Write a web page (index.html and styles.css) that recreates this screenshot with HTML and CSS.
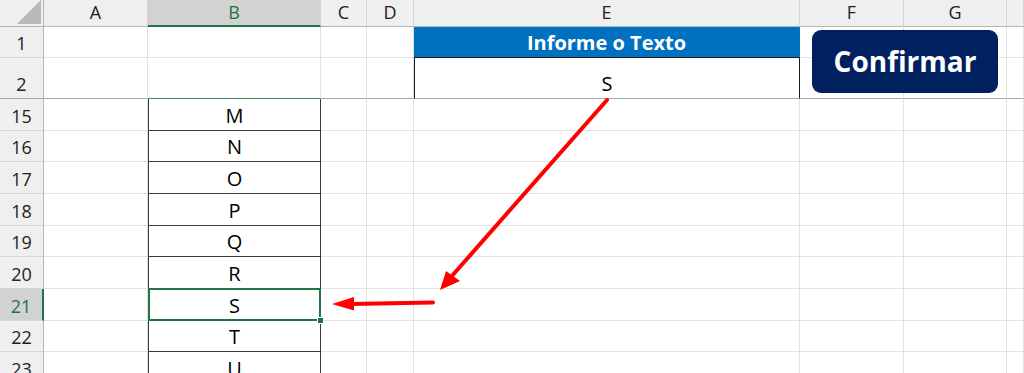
FILE: index.html
```html
<!DOCTYPE html>
<html lang="pt">
<head>
<meta charset="utf-8">
<title>Planilha</title>
<link rel="stylesheet" href="styles.css">
</head>
<body>
<div class="sheet">
  <!-- header row -->
  <div class="corner"><span class="tri"></span></div>
  <div class="ch">A</div>
  <div class="ch active">B</div>
  <div class="ch">C</div>
  <div class="ch">D</div>
  <div class="ch">E</div>
  <div class="ch">F</div>
  <div class="ch">G</div>
  <div class="ch"></div>

  <!-- row 1 -->
  <div class="rh">1</div>
  <div class="c"></div>
  <div class="c"></div>
  <div class="c"></div>
  <div class="c"></div>
  <div class="c title">Informe o Texto</div>
  <div class="c"></div>
  <div class="c"></div>
  <div class="c"></div>

  <!-- row 2 -->
  <div class="rh frz">2</div>
  <div class="c frz"></div>
  <div class="c frz mark"></div>
  <div class="c frz"></div>
  <div class="c frz"></div>
  <div class="c frz input">S</div>
  <div class="c frz"></div>
  <div class="c frz"></div>
  <div class="c frz"></div>

  <!-- row 15 -->
  <div class="rh">15</div>
  <div class="c"></div><div class="c box">M</div><div class="c"></div><div class="c"></div><div class="c"></div><div class="c"></div><div class="c"></div><div class="c"></div>
  <!-- row 16 -->
  <div class="rh">16</div>
  <div class="c"></div><div class="c box">N</div><div class="c"></div><div class="c"></div><div class="c"></div><div class="c"></div><div class="c"></div><div class="c"></div>
  <!-- row 17 -->
  <div class="rh">17</div>
  <div class="c"></div><div class="c box">O</div><div class="c"></div><div class="c"></div><div class="c"></div><div class="c"></div><div class="c"></div><div class="c"></div>
  <!-- row 18 -->
  <div class="rh">18</div>
  <div class="c"></div><div class="c box">P</div><div class="c"></div><div class="c"></div><div class="c"></div><div class="c"></div><div class="c"></div><div class="c"></div>
  <!-- row 19 -->
  <div class="rh">19</div>
  <div class="c"></div><div class="c box">Q</div><div class="c"></div><div class="c"></div><div class="c"></div><div class="c"></div><div class="c"></div><div class="c"></div>
  <!-- row 20 -->
  <div class="rh">20</div>
  <div class="c"></div><div class="c box">R</div><div class="c"></div><div class="c"></div><div class="c"></div><div class="c"></div><div class="c"></div><div class="c"></div>
  <!-- row 21 -->
  <div class="rh active">21</div>
  <div class="c"></div><div class="c box sel">S<span class="handle"></span></div><div class="c"></div><div class="c"></div><div class="c"></div><div class="c"></div><div class="c"></div><div class="c"></div>
  <!-- row 22 -->
  <div class="rh">22</div>
  <div class="c"></div><div class="c box">T</div><div class="c"></div><div class="c"></div><div class="c"></div><div class="c"></div><div class="c"></div><div class="c"></div>
  <!-- row 23 -->
  <div class="rh">23</div>
  <div class="c"></div><div class="c box">U</div><div class="c"></div><div class="c"></div><div class="c"></div><div class="c"></div><div class="c"></div><div class="c"></div>

  <button class="confirm" type="button">Confirmar</button>

  <svg class="arrows" width="1024" height="373" viewBox="0 0 1024 373" aria-hidden="true">
    <line x1="607" y1="100" x2="451" y2="277" stroke="#ff0000" stroke-width="4" stroke-linecap="round"/>
    <polygon points="440,290 446,271 460,281" fill="#ff0000"/>
    <line x1="433" y1="302.5" x2="350" y2="304" stroke="#ff0000" stroke-width="4" stroke-linecap="round"/>
    <polygon points="332,304 354,297 354,310.5" fill="#ff0000"/>
  </svg>
</div>
</body>
</html>
```

FILE: styles.css
```css
html, body {
  margin: 0;
  padding: 0;
  background: #ffffff;
  overflow: hidden;
}

.sheet {
  position: relative;
  display: grid;
  grid-template-columns: 44px 104px 173px 46px 47px 386px 104px 103px 17px;
  grid-template-rows: 27px 31px 41px 32px 31px 32px 32px 31px 32px 32px 31px 32px;
  width: 1024px;
  height: 373px;
  overflow: hidden;
  font-family: "Open Sans", "Noto Sans", sans-serif;
  color: #000;
}

.corner {
  background: #efefef;
  border-right: 1px solid #b5b5b5;
  border-bottom: 1px solid #b5b5b5;
  box-sizing: border-box;
  display: flex;
  justify-content: flex-end;
  align-items: flex-end;
  padding: 0 2px 2px 0;
}

.tri {
  width: 0;
  height: 0;
  border-left: 24px solid transparent;
  border-bottom: 24px solid #b9b9b9;
}

.ch {
  box-sizing: border-box;
  background: #efefef;
  border-right: 1px solid #d6d6d6;
  border-bottom: 1px solid #b5b5b5;
  display: flex;
  justify-content: center;
  align-items: center;
  padding-bottom: 2px;
  font-size: 18px;
  line-height: 24px;
  color: #222;
}

.ch.active {
  background: #d2d2d2;
  color: #217346;
  border-bottom: 2px solid #217346;
}

.rh {
  box-sizing: border-box;
  background: #efefef;
  border-right: 1px solid #b5b5b5;
  border-bottom: 1px solid #d6d6d6;
  display: flex;
  justify-content: center;
  align-items: flex-end;
  padding-bottom: 2px;
  font-size: 18px;
  line-height: 24px;
  color: #222;
}

.rh.active {
  background: #d2d2d2;
  color: #217346;
  border-right: 2px solid #217346;
}

.c {
  box-sizing: border-box;
  border-right: 1px solid #e1e1e1;
  border-bottom: 1px solid #e1e1e1;
  display: flex;
  justify-content: center;
  align-items: flex-end;
  padding-bottom: 1px;
  font-size: 20px;
  line-height: 26px;
  white-space: nowrap;
}

.frz {
  border-bottom: 1px solid #a8a8a8;
}

.c.mark {
  border-bottom: 1px solid #3f8a5f;
}

.title {
  background: #0070c0;
  color: #ffffff;
  font-weight: 700;
  border-right-color: #0070c0;
  border-bottom: 1px solid #1a1a1a;
}

.input {
  border-left: 1px solid #1a1a1a;
  border-right: 1px solid #1a1a1a;
}

.box {
  border-left: 1px solid #3a3a3a;
  border-right: 1px solid #3a3a3a;
  border-bottom: 1px solid #3a3a3a;
}

.sel {
  position: relative;
  border-left: 0;
  border-right: 0;
  margin-top: -1px;
  border-bottom: 0;
  box-shadow: inset 0 0 0 2px #217346;
  padding-bottom: 2px;
}

.handle {
  position: absolute;
  right: -2px;
  bottom: -2px;
  width: 5px;
  height: 5px;
  background: #217346;
  outline: 1px solid #ffffff;
}

.confirm {
  position: absolute;
  left: 812px;
  top: 30px;
  width: 186px;
  height: 63px;
  border: 0;
  border-radius: 9px;
  background: #002060;
  color: #ffffff;
  font-family: "Open Sans", "Noto Sans", sans-serif;
  font-weight: 700;
  font-size: 28px;
  line-height: 1;
  padding: 0 0 2px 0;
  display: flex;
  justify-content: center;
  align-items: center;
}

.arrows {
  position: absolute;
  left: 0;
  top: 0;
  pointer-events: none;
}
```
